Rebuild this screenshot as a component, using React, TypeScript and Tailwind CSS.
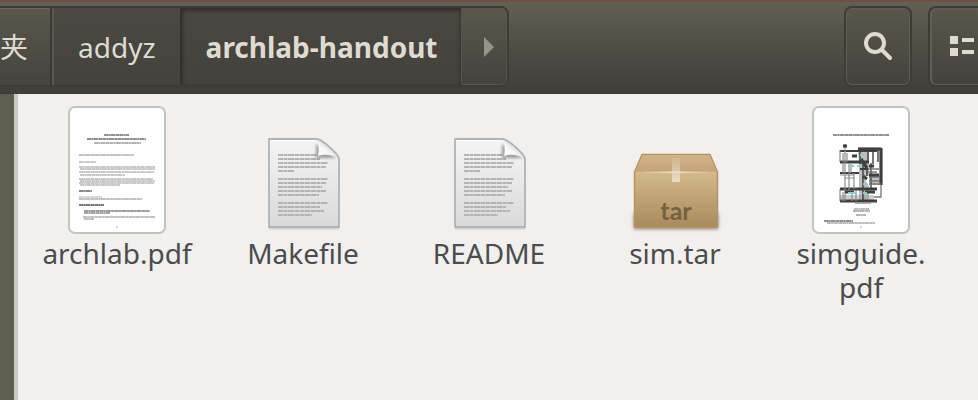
import type { ReactNode } from 'react';

// [x1, x2, y, opacity]
type Row = [number, number, number, number];

const articleRows: Row[] = [
  [36, 61, 29, 0.5],
  [19, 78, 33, 0.5],
  [26, 73, 37, 0.35],
  [11, 66, 49, 0.28],
  [11, 28, 56, 0.25],
  [11, 87, 61, 0.25],
  [12, 87, 63, 0.25],
  [11, 86, 66, 0.25],
  [12, 57, 69, 0.25],
  [11, 85, 73, 0.25],
  [12, 87, 75, 0.25],
  [11, 86, 77, 0.25],
  [12, 52, 79, 0.25],
  [11, 24, 85, 0.55],
  [11, 34, 91, 0.2],
  [11, 74, 93, 0.28],
  [11, 36, 99, 0.6],
  [16, 82, 105, 0.45],
  [16, 42, 107, 0.4],
  [15, 87, 111, 0.28],
  [16, 26, 113, 0.28],
  [48, 50, 121, 0.2],
];

const guideRows: Row[] = [
  [21, 77, 29, 0.5],
  [42, 57, 103, 0.3],
  [41, 58, 105, 0.35],
  [44, 54, 109, 0.35],
  [12, 41, 115, 0.5],
  [15, 63, 117, 0.3],
  [48, 50, 121, 0.2],
];

const sheetRows: [number, number][] = [
  [62, 49], [65, 53], [73, 57], [71, 61], [39, 65],
  [73, 73], [71, 77], [67, 81], [71, 85], [64, 89],
  [73, 97], [65, 101], [69, 105], [57, 109],
];

function PdfThumb({ rows, children }: { rows: Row[]; children?: ReactNode }) {
  return (
    <svg viewBox="0 0 98 128" className="h-32 w-[98px]" aria-hidden="true">
      <rect x="1" y="1" width="96" height="126" rx="6" fill="#fff" stroke="#c3c4bf" strokeWidth="2" />
      {rows.map(([x1, x2, y, opacity]) => (
        <path
          key={y}
          d={`M${x1} ${y}H${x2}`}
          stroke="#222"
          strokeWidth="1.8"
          strokeOpacity={opacity}
          strokeDasharray="4 .3 2 .3 5 .4 3 .3"
        />
      ))}
      {children}
    </svg>
  );
}

// Processor block diagram on the cover of the guide
function Diagram() {
  return (
    <g fill="none" stroke="#3f3f3f">
      <path d="M46 43h11v27h-6l6 10v14H47V60zM57 69h11v10H57z" fill="#888" fillOpacity=".55" stroke="none" />
      <path d="M28 89h34v6H28z" fill="#999" fillOpacity=".5" stroke="none" />
      <path d="M28 45h37M28 67h19M48 63h8" strokeWidth="2.2" />
      <path d="M28 56h29M28 83h37M28 95h37" strokeWidth="3" />
      <path d="M46 43h23" strokeWidth="3.2" />
      <path d="M33 38v57M31 47v9M37 57v27M42 67v16M35 47v9M31 58v9M39 58v9M33 72h9M31 86v9M40 84v11M44 84v11M28 69h14" stroke="#8c8c8c" strokeWidth="1.2" />
      <path d="M28 44v12M28 83v12" stroke="#777" strokeWidth="1" />
      <path d="M48 42v16M51 56v38M56 43v14M59 57v26M55 62v8M61 44v14M66 44v12" strokeWidth="1.4" />
      <path d="M69 42v37" strokeWidth="3.2" />
      <path d="M69 79v12H62M57 71h11M57 75h10M57 78h12M56 66h9M56 63h11" stroke="#777" strokeWidth="1.3" />
      <path d="M57 69h10M31 40h4M40 50h5M49 53l6 9M51 70l4 3M33 86h9M53 86h10M57 60h5" strokeWidth="3.2" />
      <path d="M43 97h16" stroke="#999" strokeWidth="1.6" />
      <path d="M48 49h5M38 60h4M45 60h5M51 78h4M36 87h9M51 87h4" stroke="#86cfd3" strokeWidth="2.2" />
    </g>
  );
}

function TextIcon({ id }: { id: string }) {
  return (
    <svg viewBox="-1 0 98 128" className="h-32 w-[98px]" aria-hidden="true">
      <defs>
        <linearGradient id={`${id}-sheet`} x1="0" y1="0" x2="0" y2="1">
          <stop offset="0" stopColor="#f5f5f5" />
          <stop offset="1" stopColor="#d9d9d9" />
        </linearGradient>
        <linearGradient id={`${id}-fold`} x1="0" y1="1" x2="1" y2="0">
          <stop offset="0" stopColor="#fff" />
          <stop offset=".4" stopColor="#f7f7f7" />
          <stop offset=".7" stopColor="#d0d0d0" />
        </linearGradient>
        <clipPath id={`${id}-clip`}>
          <path d="M14 33H62C67 34 83 47 84 53V121H14Z" />
        </clipPath>
        <filter id={`${id}-soft`} x="-40%" y="-40%" width="180%" height="180%">
          <feGaussianBlur stdDeviation="1.6" />
        </filter>
      </defs>
      <path d="M14 122.5H84" stroke="#000" strokeOpacity=".12" strokeWidth="2" />
      <path
        d="M14 33H62C67 34 83 47 84 53V121H14Z"
        fill={`url(#${id}-sheet)`}
        stroke="#b2b2b2"
        strokeWidth="1.8"
        strokeLinejoin="round"
      />
      <path d="M15.5 34.5H60" stroke="#fff" />
      {sheetRows.map(([x2, y]) => (
        <path key={y} d={`M23 ${y}H${x2}`} stroke="#b4b4b4" strokeWidth="2" strokeDasharray="5 .5 4 .5 6 .5" />
      ))}
      <g clipPath={`url(#${id}-clip)`}>
        <path d="M61 38V52H82Z" fill="#666" fillOpacity=".6" filter={`url(#${id}-soft)`} />
      </g>
      <path d="M62.5 34C64 40 64 45 63 50C69 48 78 48 84 53C82 46 68 35 62.5 34Z" fill={`url(#${id}-fold)`} />
      <path d="M62 33C67 34 83 47 84 53" fill="none" stroke="#b2b2b2" strokeWidth="1.5" />
    </svg>
  );
}

function TarIcon() {
  return (
    <svg viewBox="0 0 98 128" className="h-32 w-[98px]" aria-hidden="true">
      <defs>
        <linearGradient id="tar-front" x1="0" y1="0" x2="0" y2="1">
          <stop offset="0" stopColor="#d9c093" />
          <stop offset=".25" stopColor="#d3b98a" />
          <stop offset="1" stopColor="#a88a5d" />
        </linearGradient>
        <linearGradient id="tar-lid" x1="0" y1="0" x2="0" y2="1">
          <stop offset="0" stopColor="#d0b385" />
          <stop offset="1" stopColor="#c5a37b" />
        </linearGradient>
        <linearGradient id="tar-tape" x1="0" y1="0" x2="0" y2="1">
          <stop offset="0" stopColor="#e8d9bd" stopOpacity=".2" />
          <stop offset="1" stopColor="#e8dcc5" />
        </linearGradient>
        <linearGradient id="tar-edge">
          <stop offset="0" stopColor="#eee0c4" stopOpacity="0" />
          <stop offset=".5" stopColor="#f0e4cc" />
          <stop offset="1" stopColor="#eee0c4" stopOpacity="0" />
        </linearGradient>
        <filter id="tar-shadow" x="-10%" y="-20%" width="120%" height="150%">
          <feGaussianBlur stdDeviation="1.5" />
        </filter>
      </defs>
      <rect x="7" y="106" width="86" height="18" rx="3" fill="#555" fillOpacity=".45" filter="url(#tar-shadow)" />
      <path
        d="M16 48.5H84L91.5 66V121.5H8.5V66Z"
        fill="url(#tar-front)"
        stroke="#b9935f"
        strokeWidth="1.5"
        strokeLinejoin="round"
      />
      <path d="M16.5 49.5H83.5L91 66H9Z" fill="url(#tar-lid)" />
      <rect x="10" y="65.5" width="80" height="1.5" fill="url(#tar-edge)" />
      <rect x="46" y="52" width="8" height="24" fill="url(#tar-tape)" />
      <text x="50" y="114" textAnchor="middle" fill="#786141" className="font-['Lato',sans-serif] text-[25px] font-bold">
        tar
      </text>
    </svg>
  );
}

const files = [
  { name: 'archlab.pdf', label: 'archlab.pdf', icon: <PdfThumb rows={articleRows} /> },
  { name: 'Makefile', label: 'Makefile', icon: <TextIcon id="makefile" /> },
  { name: 'README', label: 'README', icon: <TextIcon id="readme" /> },
  { name: 'sim.tar', label: 'sim.tar', icon: <TarIcon /> },
  {
    name: 'simguide.pdf',
    label: <>simguide.<wbr />pdf</>,
    icon: (
      <PdfThumb rows={guideRows}>
        <Diagram />
      </PdfThumb>
    ),
  },
];

export default function App() {
  return (
    <div className="flex min-h-screen flex-col overflow-hidden bg-[#f1f0ee] font-['Noto_Sans','Noto_Sans_CJK_SC',sans-serif]">
      <header className="flex justify-between border-t-2 border-[#704f46] bg-linear-to-b from-[#625f53] to-[#3e3d38] pt-1 pb-[7px] text-[28px] text-[#dfdbd2]">
        <nav aria-label="Path" className="flex h-[81px] overflow-hidden rounded-r-lg border-2 border-l-0 border-[#3d3c37] text-shadow-[0_-1px_0_#22211e]">
          <button className="border-r-2 border-[#3a3935] bg-linear-to-b from-[#5a574c] to-[#45443e] pr-[22px] inset-shadow-[0_1px_0_#69665b]">
            夹
          </button>
          <button className="border-l-2 border-[#5b594f] bg-linear-to-b from-[#4a4942] to-[#43423c] px-6">
            addyz
          </button>
          <button
            aria-current="page"
            className="border-l-2 border-[#33322e] bg-linear-to-b from-[#484740] to-[#43423c] px-6 font-bold inset-shadow-[0_2px_4px_#2b2a27]"
          >
            archlab-handout
          </button>
          <button aria-label="Next folder" className="rounded-r-md border border-[#57564d] bg-linear-to-b from-[#5a574c] to-[#44433d] pr-3 pl-[22px]">
            <svg viewBox="0 0 10 20" className="h-5 w-[10px]" aria-hidden="true">
              <path d="M0 0L10 10L0 20Z" fill="#97948c" />
            </svg>
          </button>
        </nav>
        <div className="flex gap-4">
          <button aria-label="Search" className="flex h-[81px] w-[68px] items-center justify-center rounded-lg border-2 border-[#3d3c37] bg-linear-to-b from-[#5a574c] to-[#43423c] pb-[2px] inset-shadow-[0_0_0_1px_#5f5d54]">
            <svg viewBox="0 0 30 30" className="size-[30px]" aria-hidden="true">
              <circle cx="12" cy="12" r="9" fill="none" stroke="#dfdbd2" strokeWidth="4" />
              <path d="M19 19L27 27" stroke="#dfdbd2" strokeWidth="4" strokeLinecap="round" />
            </svg>
          </button>
          <button aria-label="List view" className="flex h-[81px] w-[50px] items-center justify-end rounded-l-lg border-2 border-r-0 border-[#3d3c37] bg-linear-to-b from-[#5a574c] to-[#43423c] pb-[2px] inset-shadow-[1px_0_0_1px_#5f5d54]">
            <svg viewBox="0 0 29 20" className="h-5 w-[29px]" fill="#dfdbd2" aria-hidden="true">
              <path d="M1 0h8v8H1zM13 2h12v4H13zM1 12h8v8H1zM13 14h12v4H13z" />
            </svg>
          </button>
        </div>
      </header>
      <div className="flex grow">
        <div className="w-[14px] shrink-0 bg-[#605e51]" />
        <main className="grow border-l-4 border-[#cac7c4] pt-3 pl-[6px]">
          <ul className="flex flex-wrap">
            {files.map(({ name, label, icon }) => (
              <li key={name} className="flex w-[186px] flex-col items-center gap-[2px] text-center text-[28px] leading-[34px] text-[#4c4c4c]">
                {icon}
                <span className="w-40">{label}</span>
              </li>
            ))}
          </ul>
        </main>
      </div>
    </div>
  );
}
